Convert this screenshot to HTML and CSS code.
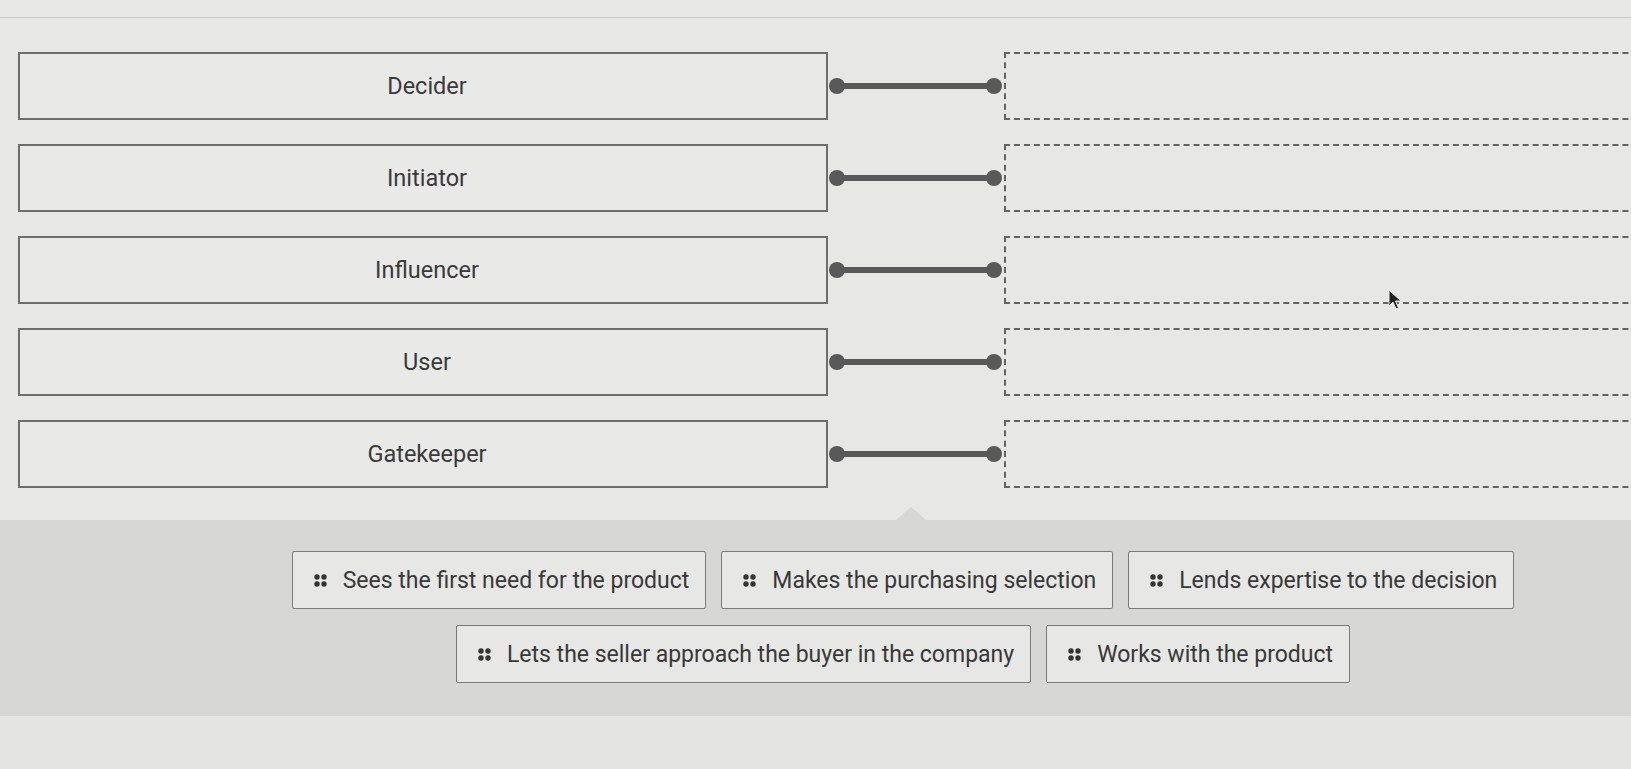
FILE: index.html
```html
<!DOCTYPE html>
<html lang="en">
<head>
<meta charset="utf-8">
<title>Match the roles</title>
<link rel="stylesheet" href="styles.css">
</head>
<body>
<div class="page">
  <div class="top-rule"></div>
  <div class="rows">
    <div class="row">
      <div class="label-box">Decider</div>
      <div class="connector"><span class="dot"></span><span class="bar"></span><span class="dot"></span></div>
      <div class="drop"></div>
    </div>
    <div class="row">
      <div class="label-box">Initiator</div>
      <div class="connector"><span class="dot"></span><span class="bar"></span><span class="dot"></span></div>
      <div class="drop"></div>
    </div>
    <div class="row">
      <div class="label-box">Influencer</div>
      <div class="connector"><span class="dot"></span><span class="bar"></span><span class="dot"></span></div>
      <div class="drop"></div>
    </div>
    <div class="row">
      <div class="label-box">User</div>
      <div class="connector"><span class="dot"></span><span class="bar"></span><span class="dot"></span></div>
      <div class="drop"></div>
    </div>
    <div class="row">
      <div class="label-box">Gatekeeper</div>
      <div class="connector"><span class="dot"></span><span class="bar"></span><span class="dot"></span></div>
      <div class="drop"></div>
    </div>
  </div>
  <svg class="cursor" width="14" height="22" viewBox="0 0 14 22"><path d="M1 1 L1 17 L5 13 L8 20 L10.5 19 L7.5 12 L13 12 Z" fill="#222" stroke="#eee" stroke-width="1"/></svg>
</div>

<div class="panel">
  <div class="bank">
    <div class="bank-row">
      <div class="chip"><svg class="grip" width="13" height="13" viewBox="0 0 13 13"><circle cx="3" cy="3" r="2.7"/><circle cx="10" cy="3" r="2.7"/><circle cx="3" cy="10" r="2.7"/><circle cx="10" cy="10" r="2.7"/></svg><span>Sees the first need for the product</span></div>
      <div class="chip"><svg class="grip" width="13" height="13" viewBox="0 0 13 13"><circle cx="3" cy="3" r="2.7"/><circle cx="10" cy="3" r="2.7"/><circle cx="3" cy="10" r="2.7"/><circle cx="10" cy="10" r="2.7"/></svg><span>Makes the purchasing selection</span></div>
      <div class="chip"><svg class="grip" width="13" height="13" viewBox="0 0 13 13"><circle cx="3" cy="3" r="2.7"/><circle cx="10" cy="3" r="2.7"/><circle cx="3" cy="10" r="2.7"/><circle cx="10" cy="10" r="2.7"/></svg><span>Lends expertise to the decision</span></div>
    </div>
    <div class="bank-row">
      <div class="chip"><svg class="grip" width="13" height="13" viewBox="0 0 13 13"><circle cx="3" cy="3" r="2.7"/><circle cx="10" cy="3" r="2.7"/><circle cx="3" cy="10" r="2.7"/><circle cx="10" cy="10" r="2.7"/></svg><span>Lets the seller approach the buyer in the company</span></div>
      <div class="chip"><svg class="grip" width="13" height="13" viewBox="0 0 13 13"><circle cx="3" cy="3" r="2.7"/><circle cx="10" cy="3" r="2.7"/><circle cx="3" cy="10" r="2.7"/><circle cx="10" cy="10" r="2.7"/></svg><span>Works with the product</span></div>
    </div>
  </div>
</div>
<div class="footer-space"></div>
</body>
</html>
```

FILE: styles.css
```css
html, body {
  margin: 0;
  padding: 0;
  overflow: hidden;
}
body {
  background: #e7e7e5;
  font-family: Roboto, "Liberation Sans", Arial, sans-serif;
  color: #3b3b3b;
  width: 1631px;
  height: 769px;
}
.page {
  position: relative;
  width: 1770px;
  padding-left: 18px;
}
.top-rule {
  height: 1px;
  background: #c9c9c7;
  margin-top: 17px;
  margin-left: -18px;
}
.rows {
  display: flex;
  flex-direction: column;
  gap: 24px;
  padding-top: 34px;
}
.row {
  display: flex;
  align-items: center;
  height: 68px;
}
.label-box {
  box-sizing: border-box;
  width: 810px;
  height: 68px;
  border: 2px solid #6e6e6e;
  background: #e9e9e7;
  display: flex;
  align-items: center;
  justify-content: center;
  padding-left: 8px;
  font-size: 23.5px;
  color: #3a3a3a;
}
.connector {
  width: 176px;
  display: flex;
  align-items: center;
  padding: 0 2px 0 1px;
  box-sizing: border-box;
}
.dot {
  width: 16px;
  height: 16px;
  border-radius: 50%;
  background: #595959;
  flex: none;
}
.bar {
  flex: 1;
  height: 6px;
  background: #595959;
  margin: 0 -2px;
}
.drop {
  flex: 1;
  box-sizing: border-box;
  height: 68px;
  border: 2px dashed #626262;
}
.cursor {
  position: absolute;
  left: 1388px;
  top: 272px;
}
.panel {
  position: relative;
  margin-top: 32px;
  background: #d7d7d5;
  height: 196px;
  box-sizing: border-box;
  padding-top: 31px;
}
.panel::before {
  content: "";
  position: absolute;
  left: 896px;
  top: -13px;
  border-left: 15px solid transparent;
  border-right: 15px solid transparent;
  border-bottom: 13px solid #d7d7d5;
}
.bank {
  width: 1770px;
  margin-left: 18px;
  display: flex;
  flex-direction: column;
  gap: 16px;
}
.bank-row {
  display: flex;
  justify-content: center;
  gap: 15px;
}
.chip {
  box-sizing: border-box;
  height: 58px;
  display: flex;
  align-items: center;
  gap: 16px;
  padding: 0 16px 0 21px;
  border: 1.5px solid #7a7a7a;
  border-radius: 2px;
  background: #e7e7e5;
  font-size: 23px;
  color: #383838;
  white-space: nowrap;
}
.grip {
  flex: none;
  fill: #333;
}
.footer-space {
  height: 60px;
  background: #e4e4e2;
}
```
